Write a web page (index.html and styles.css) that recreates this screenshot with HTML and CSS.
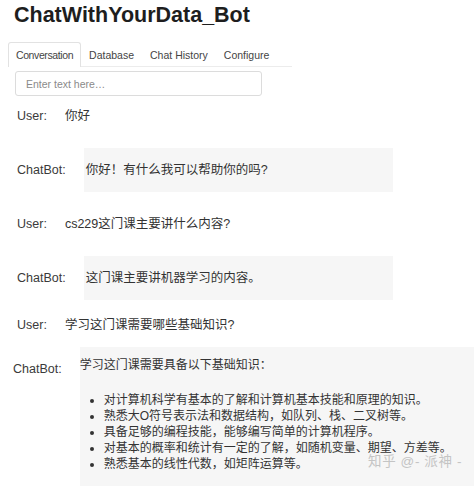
FILE: index.html
```html
<!DOCTYPE html>
<html lang="en">
<head>
    <meta charset="UTF-8">
    <meta name="viewport" content="width=device-width, initial-scale=1.0">
    <title>ChatWithYourData_Bot</title>
    <link rel="stylesheet" href="styles.css">
</head>
<body>
    <h1 class="title">ChatWithYourData_Bot</h1>

    <div class="tabs">
        <div class="tab active">Conversation</div>
        <div class="tab">Database</div>
        <div class="tab">Chat History</div>
        <div class="tab">Configure</div>
    </div>

    <input class="prompt" type="text" placeholder="Enter text here…">

    <div class="chat">
        <div class="msg">
            <span class="who">User:</span>
            <div class="text">你好</div>
        </div>
        <div class="msg">
            <span class="who">ChatBot:</span>
            <div class="bubble">你好！有什么我可以帮助你的吗?</div>
        </div>
        <div class="msg">
            <span class="who">User:</span>
            <div class="text">cs229这门课主要讲什么内容?</div>
        </div>
        <div class="msg">
            <span class="who">ChatBot:</span>
            <div class="bubble">这门课主要讲机器学习的内容。</div>
        </div>
        <div class="msg msg-tight">
            <span class="who">User:</span>
            <div class="text">学习这门课需要哪些基础知识?</div>
        </div>
        <div class="msg msg-long">
            <span class="who">ChatBot:</span>
            <div class="bubble">
                <p>学习这门课需要具备以下基础知识：</p>
                <ul>
                    <li>对计算机科学有基本的了解和计算机基本技能和原理的知识。</li>
                    <li>熟悉大O符号表示法和数据结构，如队列、栈、二叉树等。</li>
                    <li>具备足够的编程技能，能够编写简单的计算机程序。</li>
                    <li>对基本的概率和统计有一定的了解，如随机变量、期望、方差等。</li>
                    <li>熟悉基本的线性代数，如矩阵运算等。</li>
                </ul>
                <span class="watermark">知乎 @- 派神 -</span>
            </div>
        </div>
    </div>
</body>
</html>
```

FILE: styles.css
```css
body {
    margin: 0;
    overflow: hidden;
    background-color: #fff;
    color: #333;
    font-family: "Liberation Sans", "Noto Sans CJK SC", sans-serif;
}

.title {
    margin: 0;
    padding: 2px 0 0 14px;
    font-size: 21.5px;
    line-height: 26px;
    color: #1e1e1e;
}

.tabs {
    display: flex;
    width: 284px;
    margin: 14px 0 0 8px;
    border-bottom: 1px solid #ececec;
}

.tab {
    padding: 0 7px;
    height: 23px;
    line-height: 24px;
    font-size: 10.5px;
    color: #444;
    border: 1px solid transparent;
    border-bottom: none;
}

.tab.active {
    border-color: #e2e2e2;
    border-radius: 3px 3px 0 0;
    background-color: #fff;
    margin-bottom: -1px;
    height: 24px;
    letter-spacing: -0.4px;
}

.prompt {
    display: block;
    box-sizing: border-box;
    width: 247px;
    height: 25px;
    margin: 4px 0 0 15px;
    padding: 0 10px;
    border: 1px solid #dcdcdc;
    border-radius: 3px;
    font-family: inherit;
    font-size: 10.5px;
    color: #333;
}

.prompt::placeholder {
    color: #8a8a8a;
}

.chat {
    display: flex;
    flex-direction: column;
    gap: 22px;
    padding: 10px 0 0 17px;
}

.msg {
    display: flex;
    align-items: flex-start;
    gap: 18px;
    font-size: 12.5px;
    line-height: 20px;
}

.who {
    color: #3a3a3a;
}

.msg .bubble {
    width: 307px;
    padding: 12px 0 12px 2px;
    background-color: #f6f6f6;
}

.msg:has(.bubble) .who {
    margin-top: 12px;
}

.msg-tight {
    margin-top: -7px;
}

.msg-long {
    margin-top: -10px;
    margin-left: -4px;
}

.msg-long .who {
    margin-top: 8px;
}

.msg.msg-long .bubble {
    position: relative;
    flex: 1;
    width: auto;
    padding: 8px 0 30px 0;
    font-size: 12px;
}

.msg-long p {
    margin: 0;
}

.msg-long ul {
    margin: 17px 0 0 0;
    padding-left: 24px;
    line-height: 16px;
}

.watermark {
    position: absolute;
    right: 12px;
    top: 106px;
    font-size: 13.5px;
    line-height: 18px;
    letter-spacing: 0.6px;
    color: #c4c4c4;
}
```
